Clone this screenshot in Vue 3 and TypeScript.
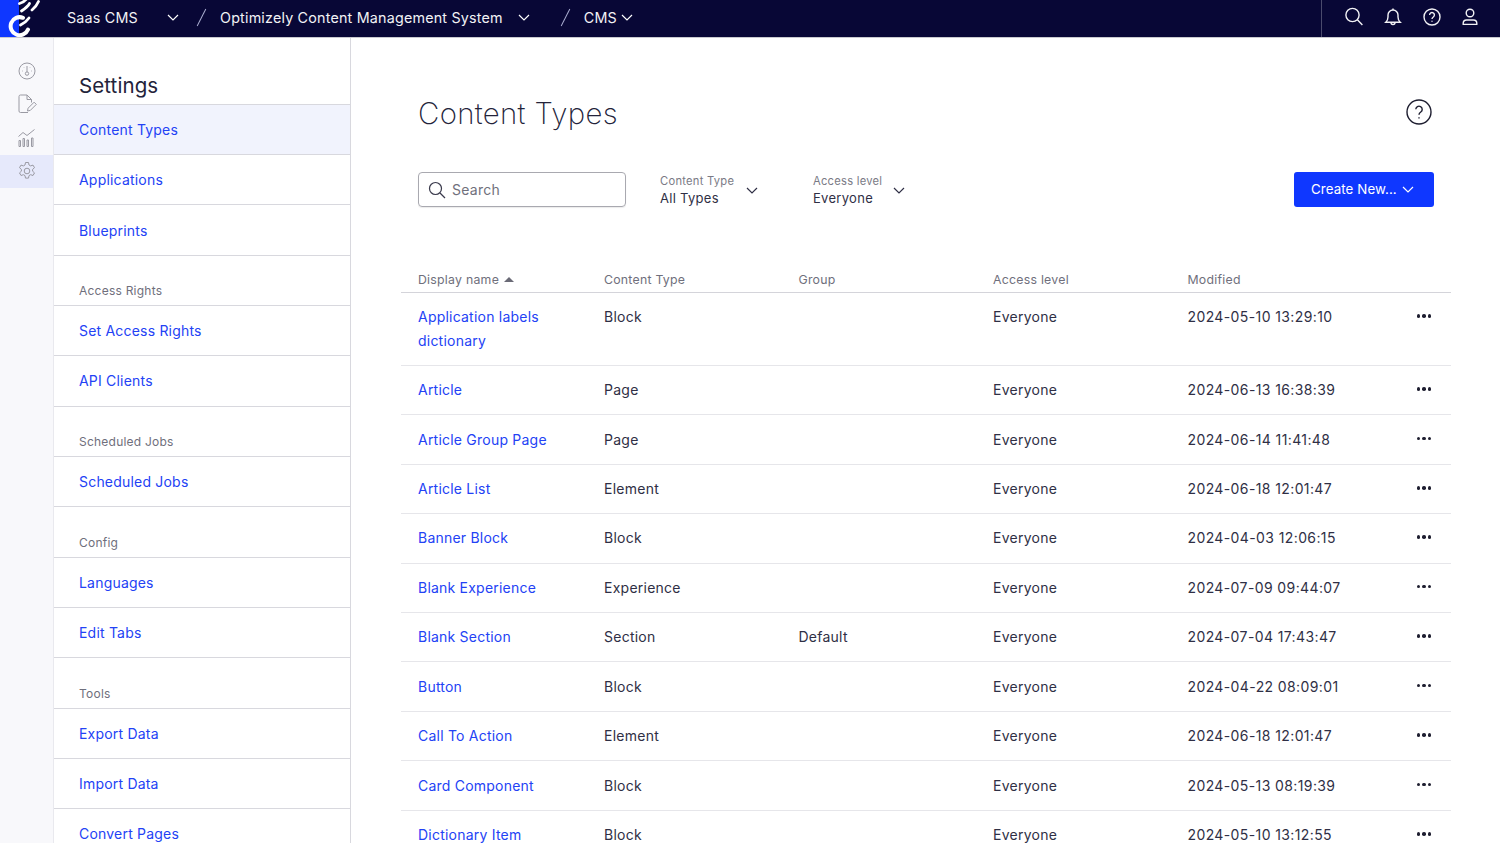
<script setup lang="ts">
interface Row { name: string; type: string; group?: string; modified: string }
const nav: { label?: string; items: string[] }[] = [
  { items: ['Content Types', 'Applications', 'Blueprints'] },
  { label: 'Access Rights', items: ['Set Access Rights', 'API Clients'] },
  { label: 'Scheduled Jobs', items: ['Scheduled Jobs'] },
  { label: 'Config', items: ['Languages', 'Edit Tabs'] },
  { label: 'Tools', items: ['Export Data', 'Import Data', 'Convert Pages'] },
]
const rows: Row[] = [
  { name: 'Application labels dictionary', type: 'Block', modified: '2024-05-10 13:29:10' },
  { name: 'Article', type: 'Page', modified: '2024-06-13 16:38:39' },
  { name: 'Article Group Page', type: 'Page', modified: '2024-06-14 11:41:48' },
  { name: 'Article List', type: 'Element', modified: '2024-06-18 12:01:47' },
  { name: 'Banner Block', type: 'Block', modified: '2024-04-03 12:06:15' },
  { name: 'Blank Experience', type: 'Experience', modified: '2024-07-09 09:44:07' },
  { name: 'Blank Section', type: 'Section', group: 'Default', modified: '2024-07-04 17:43:47' },
  { name: 'Button', type: 'Block', modified: '2024-04-22 08:09:01' },
  { name: 'Call To Action', type: 'Element', modified: '2024-06-18 12:01:47' },
  { name: 'Card Component', type: 'Block', modified: '2024-05-13 08:19:39' },
  { name: 'Dictionary Item', type: 'Block', modified: '2024-05-10 13:12:55' },
]
</script>

<template>
  <div class="app">
    <header class="top">
      <div class="logo">
        <svg width="40" height="37" viewBox="0 0 40 37" fill="none" stroke="#fff" stroke-linecap="round">
          <path d="M23 17.800 A9 9 0 1 0 28 29.500" stroke-width="4" />
          <path d="M20.500 25 C23.500 23.500 26.500 21.500 29 18" stroke-width="2.800" />
          <path d="M21.500 11 C24.500 9 27.500 7 29.500 3.500" stroke-width="2.800" />
          <path d="M32 10 C34.500 8 37 5 38.500 1.500" stroke-width="2.800" />
          <path d="M19.500 3.500 C22 2.800 24.500 1.500 26.500 -1" stroke-width="2.800" />
        </svg>
      </div>
      <span class="crumb c1">Saas CMS</span>
      <svg class="chev c1c" viewBox="0 0 12 7"><path d="M1 1l5 5 5-5" /></svg>
      <span class="slash s1"></span>
      <span class="crumb">Optimizely Content Management System</span>
      <svg class="chev c2c" viewBox="0 0 12 7"><path d="M1 1l5 5 5-5" /></svg>
      <span class="slash s2"></span>
      <span class="crumb">CMS</span>
      <svg class="chev c3c" viewBox="0 0 12 7"><path d="M1 1l5 5 5-5" /></svg>
      <div class="actions">
        <svg width="20" height="20" viewBox="0 0 20 20"><circle cx="8.500" cy="8" r="6.600" /><path d="M13.400 12.800l5 5.200" /></svg>
        <svg width="20" height="20" viewBox="0 0 20 20"><path d="M2.800 15.200c1.500-1.400 2.200-2.600 2.200-5.200V8a5 5 0 0 1 10 0v2c0 2.600.7 3.800 2.200 5.200z" /><path d="M8 15.500a2 2 0 0 0 4 0" /><path d="M10 1.500V3" /></svg>
        <svg width="20" height="20" viewBox="0 0 20 20"><circle cx="10" cy="10" r="8" /><path d="M7.600 8a2.400 2.400 0 1 1 3.700 2c-.9.6-1.300 1-1.300 2" /><path d="M10 13.800v1" /></svg>
        <svg class="user" width="20" height="20" viewBox="0 0 20 20"><circle cx="10" cy="6" r="3.800" /><path d="M3.200 17.400v-1.200c0-2 1.600-3.200 3.400-3.200h6.800c1.800 0 3.400 1.200 3.400 3.200v1.200z" /></svg>
      </div>
    </header>

    <div class="body">
      <aside class="rail">
        <button class="rail-btn">
          <svg width="20" height="20" viewBox="0 0 20 20"><circle cx="10" cy="10" r="8" /><circle cx="10" cy="12.600" r="1.700" /><path d="M10 11V5M5 10h.6M14.400 10h.6M6.800 6.300l.4.4M13.200 6.300l-.4.4" /></svg>
        </button>
        <button class="rail-btn">
          <svg width="20" height="20" viewBox="0 0 20 20"><path d="M11 18.500H3.500a1.500 1.500 0 0 1-1.500-1.500V2.500A1.500 1.500 0 0 1 3.500 1h6.500l4.500 4.500v3" /><path d="M10 1v4.500h4.500" /><path d="M10.500 17l.6-2.800 6-6 2.200 2.200-6 6z" /></svg>
        </button>
        <button class="rail-btn">
          <svg width="20" height="20" viewBox="0 0 20 20"><path d="M1.500 8.500L6 4.500l4 3 7.500-6" /><path d="M2 12.500h1.500v6H2zM6 10.500h1.500v8H6zM10 12h1.500v6.500H10zM14.500 10h1.500v8.500h-1.500z" /></svg>
        </button>
        <button class="rail-btn active">
          <svg width="20" height="20" viewBox="0 0 20 20"><circle cx="10" cy="10" r="2.800" /><path d="M8.500 1.500h3l.5 2.500 1.600.9 2.400-.8 1.500 2.600-1.900 1.700v1.800l1.900 1.700-1.500 2.600-2.400-.8-1.600.9-.5 2.500h-3l-.5-2.500-1.600-.9-2.400.8-1.500-2.600 1.900-1.700V8.400L2.500 6.700 4 4.100l2.400.8L8 4z" /></svg>
        </button>
      </aside>

      <nav class="side">
        <h2 class="side-title">Settings</h2>
        <div class="side-list">
          <template v-for="(g, i) in nav" :key="i">
            <div v-if="g.label" class="side-label">{{ g.label }}</div>
            <a v-for="it in g.items" :key="it" class="side-item" :class="{ current: it === 'Content Types' }">{{ it }}</a>
          </template>
        </div>
      </nav>

      <main class="main">
        <div class="head">
          <h1 class="title">Content Types</h1>
          <svg class="help" width="26" height="26" viewBox="0 0 26 26"><circle cx="13" cy="13" r="12" /><path d="M9.800 10.300a3.200 3.200 0 1 1 5 2.700c-1.200.8-1.800 1.300-1.800 2.700" /><path d="M13 18.200v1.300" /></svg>
        </div>

        <div class="filters">
          <label class="search">
            <svg width="18" height="18" viewBox="0 0 18 18"><circle cx="7.500" cy="7.500" r="6" /><path d="M12 12l5 5" /></svg>
            <span>Search</span>
          </label>
          <div class="filter f1">
            <div class="filter-text"><small>Content Type</small><span>All Types</span></div>
            <svg class="chev dark" viewBox="0 0 12 7"><path d="M1 1l5 5 5-5" /></svg>
          </div>
          <div class="filter f2">
            <div class="filter-text"><small>Access level</small><span>Everyone</span></div>
            <svg class="chev dark" viewBox="0 0 12 7"><path d="M1 1l5 5 5-5" /></svg>
          </div>
          <button class="create">Create New...
            <svg class="chev" viewBox="0 0 12 7"><path d="M1 1l5 5 5-5" /></svg>
          </button>
        </div>

        <div class="table">
          <div class="tr th">
            <div>Display name <i class="sort"></i></div>
            <div>Content Type</div>
            <div>Group</div>
            <div>Access level</div>
            <div>Modified</div>
            <div></div>
          </div>
          <div v-for="r in rows" :key="r.name" class="tr td">
            <div class="name">{{ r.name }}</div>
            <div>{{ r.type }}</div>
            <div>{{ r.group }}</div>
            <div>Everyone</div>
            <div class="date">{{ r.modified }}</div>
            <div class="dots"><b></b><b></b><b></b></div>
          </div>
        </div>
      </main>
    </div>
  </div>
</template>

<style>
html, body { margin: 0; background: #fff; }
</style>

<style scoped>
.app {
  height: 843px;
  overflow: hidden;
  display: flex;
  flex-direction: column;
  font-family: Inter, "Liberation Sans", sans-serif;
  font-size: 14px;
  color: #2f2f45;
  letter-spacing: 0.25px;
}
.top {
  height: 38px;
  box-sizing: border-box;
  padding-bottom: 3px;
  flex: none;
  background: #080736;
  border-bottom: 1px solid #c9c9cf;
  display: flex;
  align-items: center;
  color: #f2f2f5;
  font-size: 14.300px;
  letter-spacing: 0.2px;
}
.logo {
  width: 40px;
  height: 37px;
  align-self: flex-start;
  background: linear-gradient(to right, #0f37ff 19px, transparent 19px);
  flex: none;
}
.logo svg { display: block; }
.crumb { white-space: nowrap; }
.c1 { margin-left: 27px; width: 98px; }
.chev { width: 12px; height: 7px; fill: none; stroke: #fff; stroke-width: 1.200; flex: none; }
.chev.dark { stroke: #2f2f45; }
.c1c { margin-left: 2px; }
.slash { width: 1px; height: 19px; background: #a9add0; transform: rotate(27deg); flex: none; }
.s1 { margin: 0 18px 0 22px; }
.c2c { margin-left: 15px; }
.s2 { margin: 0 18px 0 35px; }
.c3c { margin-left: 4px; }
.actions {
  margin-left: auto;
  width: 179px;
  height: 37px;
  align-self: flex-start;
  border-left: 1px solid #4a4a6c;
  box-sizing: border-box;
  display: flex;
  align-items: center;
  gap: 19px;
  padding: 0 0 3px 22px;
}
.actions svg { fill: none; stroke: #f2f2f5; stroke-width: 1.400; flex: none; }
.actions .user { margin-left: -1px; }
.body { flex: 1; display: flex; min-height: 0; }
.rail {
  width: 53px;
  flex: none;
  background: #f8f8fb;
  padding-top: 16px;
  display: flex;
  flex-direction: column;
  box-sizing: border-box;
}
.rail-btn {
  height: 33.500px;
  border: 0;
  padding: 0;
  background: none;
  display: flex;
  align-items: center;
  justify-content: center;
}
.rail-btn svg { fill: none; stroke: #9a9aa3; stroke-width: 1; }
.rail-btn.active { background: #e6e9fb; }
.side {
  width: 298px;
  flex: none;
  box-sizing: border-box;
  border-left: 1px solid #e9e9ee;
  border-right: 1px solid #d8d8de;
}
.side-title {
  margin: 0;
  height: 66.700px;
  box-sizing: border-box;
  padding: 35px 0 0 25px;
  font-size: 20.500px;
  line-height: 26px;
  font-weight: 400;
  color: #23233a;
  border-bottom: 1px solid #d8d8de;
  letter-spacing: 0.1px;
}
.side-item, .side-label {
  display: flex;
  height: 50.330px;
  box-sizing: border-box;
  padding-left: 25px;
  border-bottom: 1px solid #d8d8de;
}
.side-item { align-items: center; color: #2342f5; font-size: 14px; letter-spacing: 0.2px; }
.side-item.current { background: #f1f3fd; }
.side-label {
  align-items: flex-end;
  padding-bottom: 6px;
  font-size: 12px;
  line-height: 16px;
  color: #6f6f7c;
  letter-spacing: 0.23px;
}
.main { flex: 1; min-width: 0; padding-left: 50px; }
.head {
  display: flex;
  align-items: center;
  justify-content: space-between;
  padding: 57px 67px 1px 17px;
  height: 37px;
}
.title {
  margin: 0;
  font-size: 29.400px;
  line-height: 37px;
  font-weight: 250;
  color: #23233a;
  letter-spacing: 0.33px;
}
.help { fill: none; stroke: #1e1e30; stroke-width: 1.400; margin: -4px 1px 0 0; }
.filters {
  display: flex;
  align-items: center;
  margin: 39px 66px 0 17px;
  height: 35px;
}
.search {
  width: 208px;
  height: 35px;
  box-sizing: border-box;
  border: 1px solid #a9a9b0;
  border-radius: 4px;
  box-shadow: 0 1px 1px rgba(0, 0, 0, 0.08);
  display: flex;
  align-items: center;
  gap: 6px;
  padding-left: 9px;
  color: #70707c;
}
.search svg { fill: none; stroke: #3a3a4c; stroke-width: 1.200; }
.filter { display: flex; align-items: center; }
.filter .chev { margin-top: 1px; }
.f1 { margin-left: 34px; width: 153px; }
.f1 .chev { margin-left: 28px; }
.f2 { width: 120px; }
.f2 .chev { margin-left: 20px; }
.filter-text { display: flex; flex-direction: column; margin-top: 2px; }
.f1 .filter-text { width: 58px; white-space: nowrap; }
.f2 .filter-text { width: 60px; white-space: nowrap; }
.filter-text small { font-size: 11.200px; line-height: 15px; color: #7a7a85; }
.filter-text span { font-size: 13px; line-height: 19px; color: #2f2f45; letter-spacing: 0.3px; }
.create {
  margin-left: auto;
  width: 140px;
  height: 35px;
  border: 0;
  border-radius: 3px;
  background: #0f37ff;
  color: #fff;
  font: inherit;
  font-size: 13.300px;
  letter-spacing: 0.1px;
  display: flex;
  align-items: center;
  justify-content: flex-start;
  padding: 0 0 1px 17px;
  gap: 5px;
  white-space: nowrap;
}
.table { margin-top: 55px; width: 1050px; }
.tr {
  display: grid;
  grid-template-columns: 203px 194.500px 194.500px 194.500px 195px 1fr;
  border-bottom: 1px solid #e6e6ea;
  box-sizing: border-box;
}
.tr > div { padding-left: 17px; box-sizing: border-box; }
.tr > div + div { padding-left: 0; }
.th {
  height: 31px;
  align-items: center;
  padding-top: 5px;
  font-size: 12.300px;
  color: #6f6f7c;
  border-bottom: 1px solid #d4d4da;
}
.sort {
  display: inline-block;
  width: 0;
  height: 0;
  margin: 0 0 2px 1px;
  border: 5.500px solid transparent;
  border-top: 0;
  border-bottom: 5.500px solid #6a6a76;
}
.td {
  padding: 12.300px 0 12.640px;
  line-height: 23.500px;
  color: #2f2f45;
}
.name { color: #2342f5; padding-right: 30px; letter-spacing: 0.22px; }
.date { letter-spacing: 0.39px; }
.dots { display: flex; gap: 2px; padding: 9px 0 0 34px !important; }
.dots b { width: 3.500px; height: 3.500px; border-radius: 50%; background: #1e1e30; }
</style>
